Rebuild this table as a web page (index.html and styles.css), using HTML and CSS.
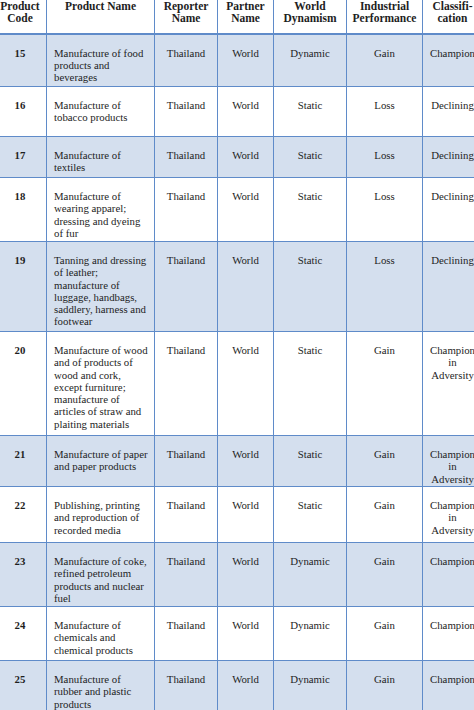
FILE: index.html
```html
<!DOCTYPE html>
<html>
<head>
<meta charset="utf-8">
<link rel="stylesheet" href="styles.css">
</head>
<body>
<table class="data">
  <colgroup>
    <col class="c-code"><col class="c-name"><col class="c-rep"><col class="c-part"><col class="c-dyn"><col class="c-perf"><col class="c-cls">
  </colgroup>
  <thead>
    <tr class="head">
      <th>Product Code</th>
      <th>Product Name</th>
      <th>Reporter Name</th>
      <th>Partner Name</th>
      <th>World Dynamism</th>
      <th>Industrial Performance</th>
      <th class="cls">Classifi-<br>cation</th>
    </tr>
  </thead>
  <tbody>
    <tr class="shade h53"><td class="code">15</td><td class="name">Manufacture of food products and beverages</td><td>Thailand</td><td>World</td><td>Dynamic</td><td>Gain</td><td class="cls">Champion</td></tr>
    <tr class="h50"><td class="code">16</td><td class="name">Manufacture of tobacco products</td><td>Thailand</td><td>World</td><td>Static</td><td>Loss</td><td class="cls">Declining</td></tr>
    <tr class="shade h41"><td class="code">17</td><td class="name">Manufacture of textiles</td><td>Thailand</td><td>World</td><td>Static</td><td>Loss</td><td class="cls">Declining</td></tr>
    <tr class="h64"><td class="code">18</td><td class="name">Manufacture of wearing apparel; dressing and dyeing of fur</td><td>Thailand</td><td>World</td><td>Static</td><td>Loss</td><td class="cls">Declining</td></tr>
    <tr class="shade h90"><td class="code">19</td><td class="name">Tanning and dressing of leather; manufacture of luggage, handbags, saddlery, harness and footwear</td><td>Thailand</td><td>World</td><td>Static</td><td>Loss</td><td class="cls">Declining</td></tr>
    <tr class="h104"><td class="code">20</td><td class="name">Manufacture of wood and of products of wood and cork, except furniture; manufacture of articles of straw and plaiting materials</td><td>Thailand</td><td>World</td><td>Static</td><td>Gain</td><td class="cls">Champion in Adversity</td></tr>
    <tr class="shade h51"><td class="code">21</td><td class="name">Manufacture of paper and paper products</td><td>Thailand</td><td>World</td><td>Static</td><td>Gain</td><td class="cls">Champion in Adversity</td></tr>
    <tr class="h56"><td class="code">22</td><td class="name">Publishing, printing and reproduction of recorded media</td><td>Thailand</td><td>World</td><td>Static</td><td>Gain</td><td class="cls">Champion in Adversity</td></tr>
    <tr class="shade h64"><td class="code">23</td><td class="name">Manufacture of coke, refined petroleum products and nuclear fuel</td><td>Thailand</td><td>World</td><td>Dynamic</td><td>Gain</td><td class="cls">Champion</td></tr>
    <tr class="h54"><td class="code">24</td><td class="name">Manufacture of chemicals and chemical products</td><td>Thailand</td><td>World</td><td>Dynamic</td><td>Gain</td><td class="cls">Champion</td></tr>
    <tr class="shade h60"><td class="code">25</td><td class="name">Manufacture of rubber and plastic products</td><td>Thailand</td><td>World</td><td>Dynamic</td><td>Gain</td><td class="cls">Champion</td></tr>
  </tbody>
</table>
</body>
</html>
```

FILE: styles.css
```css
html, body {
  margin: 0;
  padding: 0;
  background: #ffffff;
  overflow: hidden;
}

.data {
  border-collapse: collapse;
  table-layout: fixed;
  width: 489px;
  margin-left: -7px;
  margin-top: -12px;
  font-family: "Liberation Serif", "Times New Roman", serif;
  font-size: 10.8px;
  line-height: 12.3px;
  color: #1e1e1e;
}

.c-code { width: 53px; }
.c-name { width: 108px; }
.c-rep  { width: 63px; }
.c-part { width: 56px; }
.c-dyn  { width: 73px; }
.c-perf { width: 76px; }
.c-cls  { width: 60px; }

.data th,
.data td {
  border: 1px solid #5f8bc9;
  vertical-align: top;
  text-align: center;
  padding: 12px 2px 0 2px;
  box-sizing: border-box;
}

.data th {
  font-weight: bold;
  font-size: 11.5px;
  padding-top: 11px;
  height: 45px;
  border-bottom: 2px solid #5f8bc9;
}

.data td.code {
  font-weight: bold;
}

.data td.name {
  text-align: left;
  padding-left: 7px;
  padding-right: 3px;
}

.data td.cls {
  padding-left: 4px;
  padding-right: 4px;
}

.shade td {
  background: #d4dfee;
}

.h41 td { height: 41px; }
.h50 td { height: 50px; }
.h51 td { height: 51px; }
.h53 td { height: 53px; }
.h54 td { height: 54px; }
.h56 td { height: 56px; }
.h60 td { height: 60px; }
.h64 td { height: 64px; }
.h90 td { height: 90px; }
.h104 td { height: 104px; }
```
